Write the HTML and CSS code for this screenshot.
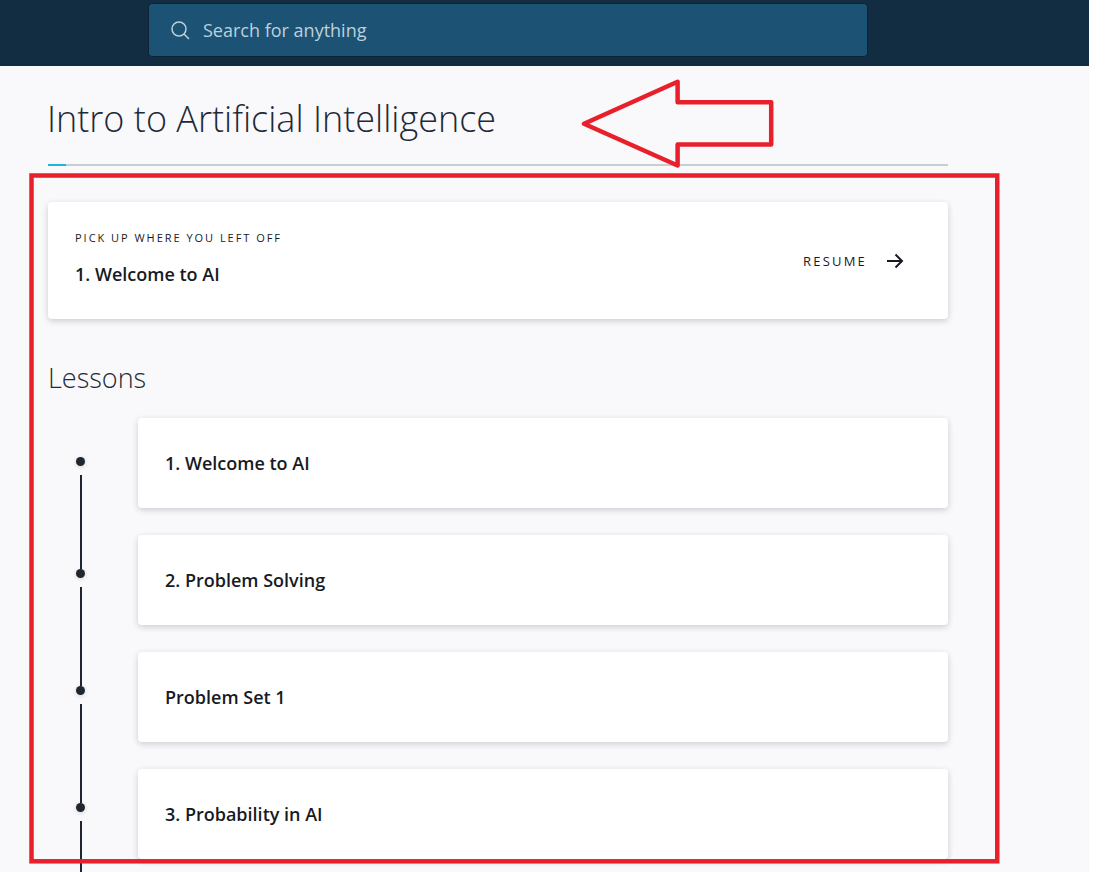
FILE: index.html
```html
<!DOCTYPE html>
<html lang="en">
<head>
<meta charset="utf-8">
<title>Intro to Artificial Intelligence</title>
<link rel="stylesheet" href="styles.css">
</head>
<body>
<div class="page">
  <header class="topbar">
    <div class="search">
      <svg class="search-icon" viewBox="0 0 20 20" width="20" height="20" aria-hidden="true"><circle cx="9" cy="9" r="7"/><path d="M14 14l5 5"/></svg>
      <span class="search-text">Search for anything</span>
    </div>
  </header>
  <main class="content">
    <h1 class="title">Intro to Artificial Intelligence</h1>
    <div class="progress"><div class="progress-fill"></div></div>
    <section class="card resume-card">
      <div>
        <div class="eyebrow">PICK UP WHERE YOU LEFT OFF</div>
        <div class="lesson-name">1. Welcome to AI</div>
      </div>
      <div class="resume">
        <span class="resume-text">RESUME</span>
        <svg class="arrow" viewBox="0 0 18 16" width="18" height="16" aria-hidden="true"><path d="M1 8h15M9.500 1.500L16 8l-6.500 6.500"/></svg>
      </div>
    </section>
    <h2 class="section-title">Lessons</h2>
    <ol class="lessons">
      <li class="lesson first">
        <div class="rail"><span class="seg-top"></span><span class="dot"></span><span class="seg-bottom"></span></div>
        <div class="card lesson-card"><span class="lesson-name">1. Welcome to AI</span></div>
      </li>
      <li class="lesson">
        <div class="rail"><span class="seg-top"></span><span class="dot"></span><span class="seg-bottom"></span></div>
        <div class="card lesson-card"><span class="lesson-name">2. Problem Solving</span></div>
      </li>
      <li class="lesson">
        <div class="rail"><span class="seg-top"></span><span class="dot"></span><span class="seg-bottom"></span></div>
        <div class="card lesson-card"><span class="lesson-name">Problem Set 1</span></div>
      </li>
      <li class="lesson">
        <div class="rail"><span class="seg-top"></span><span class="dot"></span><span class="seg-bottom"></span></div>
        <div class="card lesson-card"><span class="lesson-name">3. Probability in AI</span></div>
      </li>
    </ol>
  </main>
</div>
<svg class="annotation" width="1108" height="872" viewBox="0 0 1108 872" aria-hidden="true">
  <rect x="31.500" y="175.500" width="965.750" height="685.800"/>
  <path class="annotation-arrow" d="M584 123.700L677.600 81.750V102.300H771.200V144.500H677.600V165.500Z"/>
</svg>
</body>
</html>
```
FILE: styles.css
```css
html, body {
  margin: 0;
  padding: 0;
  height: 872px;
  overflow: hidden;
  background: #fff;
}
body {
  font-family: "Open Sans", sans-serif;
  color: #171a1f;
  position: relative;
}
.page {
  width: 1089px;
  height: 872px;
  background: #f9f9fb;
}
.topbar {
  height: 66px;
  background: #122d42;
  padding: 3px 0 0 148px;
  box-sizing: border-box;
}
.search {
  width: 720px;
  height: 54px;
  box-sizing: border-box;
  background: #1c5374;
  border: 1px solid #0d2233;
  border-radius: 4px;
  display: flex;
  align-items: center;
  padding-left: 21px;
}
.search-icon {
  fill: none;
  stroke: #bcd0dc;
  stroke-width: 1.500;
  margin-right: 13px;
}
.search-text {
  font-size: 18px;
  color: #bcd0dc;
}
.content {
  padding-left: 48px;
  width: 900px;
}
.title {
  margin: 0 0 0 -1px;
  padding-top: 26px;
  font-size: 36px;
  line-height: 54px;
  font-weight: 300;
  color: #1e2a38;
}
.progress {
  margin-top: 18px;
  height: 2px;
  background: #c6d0d1;
}
.progress-fill {
  width: 18px;
  height: 2px;
  background: #1fb5d8;
}
.card {
  background: #fff;
  border-radius: 4px;
  box-shadow: 0 2px 6px rgba(20, 30, 45, 0.2);
}
.resume-card {
  margin-top: 36px;
  height: 117px;
  box-sizing: border-box;
  padding: 0 44px 0 27px;
  display: flex;
  justify-content: space-between;
  align-items: center;
}
.resume-card > div:first-child {
  padding-bottom: 4px;
}
.eyebrow {
  font-size: 11px;
  line-height: 14px;
  letter-spacing: 1.970px;
  font-weight: 500;
  margin-bottom: 16px;
  color: #171a1f;
}
.lesson-name {
  font-size: 18px;
  line-height: 26px;
  font-weight: 600;
  color: #171a1f;
  display: block;
}
.resume {
  display: flex;
  align-items: center;
}
.resume-text {
  font-size: 13px;
  letter-spacing: 2.200px;
  font-weight: 500;
  margin-right: 19px;
}
.arrow {
  fill: none;
  stroke: #171a1f;
  stroke-width: 2;
}
.section-title {
  margin: 0;
  padding-top: 39px;
  padding-bottom: 20px;
  font-size: 27px;
  line-height: 40px;
  font-weight: 300;
  color: #1e2a38;
}
.lessons {
  list-style: none;
  margin: 0;
  padding: 0;
}
.lesson {
  display: flex;
  height: 117px;
}
.rail {
  width: 65px;
  margin-right: 25px;
  display: flex;
  flex-direction: column;
  align-items: center;
}
.seg-top {
  width: 2px;
  height: 34px;
  background: #1f2630;
}
.first .seg-top {
  height: 39px;
  background: transparent;
}
.dot {
  width: 9px;
  height: 9px;
  border-radius: 50%;
  background: #1f2630;
  box-shadow: 0 1px 4px rgba(20, 30, 45, 0.18);
  margin-bottom: 9px;
  flex: none;
}
.seg-bottom {
  width: 2px;
  flex: 1;
  background: #1f2630;
}
.lesson-card {
  flex: 1;
  height: 90px;
  display: flex;
  align-items: center;
  padding-left: 27px;
}
.annotation {
  position: absolute;
  left: 0;
  top: 0;
  fill: none;
  stroke: #e8202b;
  stroke-width: 4.500;
}
.annotation-arrow {
  stroke-linejoin: round;
}
```
